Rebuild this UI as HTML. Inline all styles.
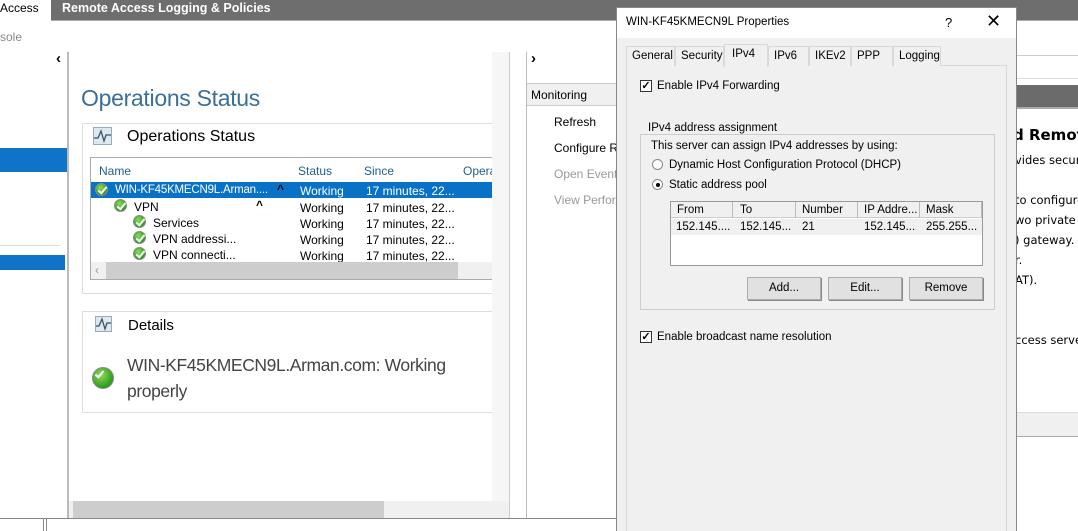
<!DOCTYPE html>
<html style="width:1078px;height:531px;overflow:hidden"><head><style>
*{margin:0;padding:0;box-sizing:border-box}
body{width:1078px;height:531px;overflow:hidden;background:#fff;font-family:"Liberation Sans",sans-serif;position:relative;font-size:12px;color:#000}
.a{position:absolute;white-space:nowrap}
.chk{position:absolute;width:13px;height:13px;border-radius:50%;background:radial-gradient(circle at 40% 35%,#8fdc5a,#2f9a1c 70%);border:1px solid #8a8a8a}
.chk:after{content:"";position:absolute;left:4px;top:1px;width:3px;height:7px;border:solid #fff;border-width:0 2px 2px 0;transform:rotate(40deg)}
.cb{position:absolute;width:12px;height:12px;border:1px solid #333;background:#fff;font-size:11px;line-height:10px;text-align:center;font-weight:bold}
.btn{position:absolute;height:23px;border:1px solid #adadad;background:#e1e1e1;text-align:center;line-height:21px;box-shadow:1px 1px 0 #888}
.tab{position:absolute;top:46px;height:20px;border:1px solid #d9d9d9;border-bottom:none;background:#f0f0f0;line-height:19px;padding-left:5px;font-size:11.5px}
.d{font-size:11.5px}
</style></head><body>
<div class="a" style="left:0;top:0;width:1078px;height:21px;background:#6e6e6e;border-bottom:1px solid #aaa"></div>
<div class="a" style="left:0;top:0;width:51px;height:21px;background:#fff;font-size:12px;line-height:16px">Access</div>
<div class="a" style="left:62px;top:1px;color:#fff;font-weight:bold;font-size:12.5px">Remote Access Logging &amp; Policies</div>
<div class="a" style="left:0;top:30px;color:#888;font-size:12px">sole</div>
<div class="a" style="left:56px;top:50px;font-size:15px;font-weight:bold">‹</div>
<div class="a" style="left:67px;top:52px;width:2px;height:466px;background:#bbb"></div>
<div class="a" style="left:0;top:148px;width:67px;height:24px;background:#0f74c8"></div>
<div class="a" style="left:0;top:245px;width:60px;height:1px;background:#ddd"></div>
<div class="a" style="left:0;top:255px;width:65px;height:15px;background:#0f74c8"></div>
<div class="a" style="left:81px;top:85px;font-size:23px;color:#3a6f98;letter-spacing:-0.3px">Operations Status</div>
<div class="a" style="left:492px;top:52px;width:17px;height:449px;background:#f6f6f6"></div>
<div class="a" style="left:509px;top:52px;width:1px;height:466px;background:#ccc"></div>
<div class="a" style="left:82px;top:123px;width:410px;height:171px;border:1px solid #ddd;border-right:none"></div>
<svg class="a" style="left:93px;top:127px" width="19" height="18"><rect x="0.5" y="0.5" width="18" height="17" fill="#dfe8ee" stroke="#9ab"/><polyline points="1,11 5,11 8,4 11,14 13,8 18,8" fill="none" stroke="#356" stroke-width="1.3"/></svg>
<div class="a" style="left:127px;top:128px;font-size:16px">Operations Status</div>
<div class="a" style="left:90px;top:157px;width:402px;height:123px;border:1px solid #aaa;border-right:none"></div>
<div class="a" style="left:99px;top:164px;color:#1e5f8e">Name</div>
<div class="a" style="left:298px;top:164px;color:#1e5f8e">Status</div>
<div class="a" style="left:364px;top:164px;color:#1e5f8e">Since</div>
<div class="a" style="left:463px;top:164px;color:#1e5f8e;width:29px;overflow:hidden">Operations</div>
<div class="a" style="left:91px;top:182px;width:401px;height:16px;background:#0a72c6"></div>
<div class="chk" style="left:95px;top:183px"></div>
<div class="a" style="left:115px;top:184px;color:#fff;font-size:11.5px;letter-spacing:-0.2px">WIN-KF45KMECN9L.Arman....</div>
<div class="a" style="left:277px;top:182px;color:#000;font-weight:bold">^</div>
<div class="a" style="left:300px;top:184px;color:#fff">Working</div>
<div class="a" style="left:366px;top:184px;color:#fff">17 minutes, 22...</div>
<div class="chk" style="left:114px;top:199px"></div>
<div class="a" style="left:134px;top:200px">VPN</div>
<div class="a" style="left:256px;top:198px;font-weight:bold">^</div>
<div class="chk" style="left:133px;top:215px"></div><div class="a" style="left:153px;top:216px">Services</div>
<div class="chk" style="left:133px;top:231px"></div><div class="a" style="left:153px;top:232px">VPN addressi...</div>
<div class="chk" style="left:133px;top:247px"></div><div class="a" style="left:153px;top:248px">VPN connecti...</div>
<div class="a" style="left:300px;top:200px;line-height:16px">Working<br>Working<br>Working<br>Working</div>
<div class="a" style="left:366px;top:200px;line-height:16px">17 minutes, 22...<br>17 minutes, 22...<br>17 minutes, 22...<br>17 minutes, 22...</div>
<div class="a" style="left:91px;top:262px;width:401px;height:17px;background:#f0f0f0"></div>
<div class="a" style="left:106px;top:262px;width:352px;height:17px;background:#cdcdcd"></div>
<div class="a" style="left:95px;top:263px;color:#999">‹</div>
<div class="a" style="left:82px;top:311px;width:410px;height:102px;border:1px solid #ddd;border-right:none"></div>
<svg class="a" style="left:95px;top:316px" width="17" height="16"><rect x="0.5" y="0.5" width="16" height="15" fill="#dfe8ee" stroke="#9ab"/><polyline points="1,10 4,10 7,3 10,13 12,7 16,7" fill="none" stroke="#356" stroke-width="1.3"/></svg>
<div class="a" style="left:128px;top:317px;font-size:15px">Details</div>
<div class="chk" style="left:92px;top:367px;width:22px;height:22px"></div>
<div class="a" style="left:127px;top:352px;font-size:17.5px;color:#444;line-height:26px;letter-spacing:-0.4px">WIN-KF45KMECN9L.Arman.com: Working<br>properly</div>
<div class="a" style="left:69px;top:501px;width:440px;height:17px;background:#f0f0f0"></div>
<div class="a" style="left:73px;top:501px;width:311px;height:17px;background:#cdcdcd"></div>
<div class="a" style="left:0;top:518px;width:617px;height:1px;background:#888"></div>
<div class="a" style="left:43px;top:519px;width:4px;height:12px;border-left:1px solid #888;border-right:1px solid #888"></div>
<div class="a" style="left:531px;top:50px;font-size:15px;font-weight:bold">›</div>
<div class="a" style="left:526px;top:52px;width:1px;height:466px;background:#bbb"></div>
<div class="a" style="left:527px;top:83px;width:90px;height:23px;background:#f0f0f0;border-top:1px solid #ccc;border-bottom:1px solid #ccc;padding:4px 0 0 4px">Monitoring</div>
<div class="a" style="left:554px;top:115px">Refresh</div>
<div class="a" style="left:554px;top:141px">Configure R</div>
<div class="a" style="left:554px;top:167px;color:#999">Open Event</div>
<div class="a" style="left:554px;top:193px;color:#999">View Perfor</div>
<div class="a" style="left:1017px;top:55px;width:61px;height:1px;background:#ccc"></div>
<div class="a" style="left:1017px;top:78px;width:61px;height:1px;background:#ddd"></div>
<div class="a" style="left:1017px;top:85px;width:61px;height:24px;background:#6b6b6b;border-bottom:2px solid #aaa"></div>
<div class="a" style="left:1013px;top:126px;font-family:'DejaVu Sans',sans-serif;font-weight:bold;font-size:15px">d Remote</div>
<div class="a" style="left:1015px;top:150px;font-family:'DejaVu Sans',sans-serif;font-size:11.5px;line-height:20px">vides secur<br><br>to configure<br>wo private<br>) gateway.<br>r.<br>AT).<br><br><br>ccess serve</div>
<div class="a" style="left:1017px;top:412px;width:61px;height:25px;background:#f0f0f0;border-top:1px solid #ddd;border-bottom:1px solid #aaa"></div>
<div class="a" style="left:616px;top:7px;width:401px;height:524px;background:#f0f0f0;border:1px solid #888;border-bottom:none"></div>
<div class="a" style="left:617px;top:8px;width:399px;height:30px;background:#fff"></div>
<div class="a d" style="left:626px;top:16px">WIN-KF45KMECN9L Properties</div>
<div class="a" style="left:945px;top:15px;font-size:13px">?</div>
<div class="a" style="left:986px;top:11px;font-size:18px;font-weight:300">✕</div>
<div class="a" style="left:626px;top:65px;width:381px;height:470px;background:#f0f0f0;border:1px solid #d9d9d9"></div>
<div class="tab" style="left:626px;width:49px">General</div>
<div class="tab" style="left:675px;width:49px">Security</div>
<div class="tab" style="left:724px;top:44px;height:23px;width:44px;background:#f0f0f0;z-index:2;padding-left:7px">IPv4</div>
<div class="tab" style="left:768px;width:41px">IPv6</div>
<div class="tab" style="left:809px;width:42px">IKEv2</div>
<div class="tab" style="left:851px;width:42px">PPP</div>
<div class="tab" style="left:893px;width:48px">Logging</div>
<div class="cb" style="left:640px;top:80px">✓</div>
<div class="a d" style="left:657px;top:80px">Enable IPv4 Forwarding</div>
<div class="a" style="left:640px;top:134px;width:355px;height:176px;border:1px solid #ccc"></div>
<div class="a d" style="left:646px;top:122px;background:#f0f0f0;padding:0 2px">IPv4 address assignment</div>
<div class="a d" style="left:651px;top:140px">This server can assign IPv4 addresses by using:</div>
<div class="a" style="left:652px;top:159px;width:11px;height:11px;border-radius:50%;border:1px solid #888;background:#fff"></div>
<div class="a d" style="left:669px;top:159px">Dynamic Host Configuration Protocol (DHCP)</div>
<div class="a" style="left:652px;top:179px;width:11px;height:11px;border-radius:50%;border:1px solid #888;background:#fff"></div>
<div class="a" style="left:656px;top:183px;width:4px;height:4px;border-radius:50%;background:#000"></div>
<div class="a d" style="left:669px;top:179px">Static address pool</div>
<div class="a" style="left:670px;top:201px;width:313px;height:65px;border:1px solid #999;background:#fff"></div>
<div class="a" style="left:671px;top:202px;width:311px;height:16px;background:#f0f0f0;border-bottom:1px solid #ccc"></div>
<div class="a" style="left:732px;top:202px;width:1px;height:16px;background:#bbb"></div>
<div class="a" style="left:795px;top:202px;width:1px;height:16px;background:#bbb"></div>
<div class="a" style="left:857px;top:202px;width:1px;height:16px;background:#bbb"></div>
<div class="a" style="left:919px;top:202px;width:1px;height:16px;background:#bbb"></div>
<div class="a" style="left:981px;top:202px;width:1px;height:16px;background:#bbb"></div>
<div class="a d" style="left:677px;top:204px">From</div>
<div class="a d" style="left:740px;top:204px">To</div>
<div class="a d" style="left:802px;top:204px">Number</div>
<div class="a d" style="left:864px;top:204px">IP Addre...</div>
<div class="a d" style="left:926px;top:204px">Mask</div>
<div class="a" style="left:671px;top:219px;width:311px;height:16px;background:#f0f0f0"></div>
<div class="a d" style="left:676px;top:221px">152.145....</div>
<div class="a d" style="left:740px;top:221px">152.145...</div>
<div class="a d" style="left:802px;top:221px">21</div>
<div class="a d" style="left:864px;top:221px">152.145...</div>
<div class="a d" style="left:926px;top:221px">255.255...</div>
<div class="btn d" style="left:747px;top:277px;width:74px">Add...</div>
<div class="btn d" style="left:828px;top:277px;width:74px">Edit...</div>
<div class="btn d" style="left:909px;top:277px;width:74px">Remove</div>
<div class="cb" style="left:640px;top:331px">✓</div>
<div class="a d" style="left:657px;top:331px">Enable broadcast name resolution</div>
</body></html>
